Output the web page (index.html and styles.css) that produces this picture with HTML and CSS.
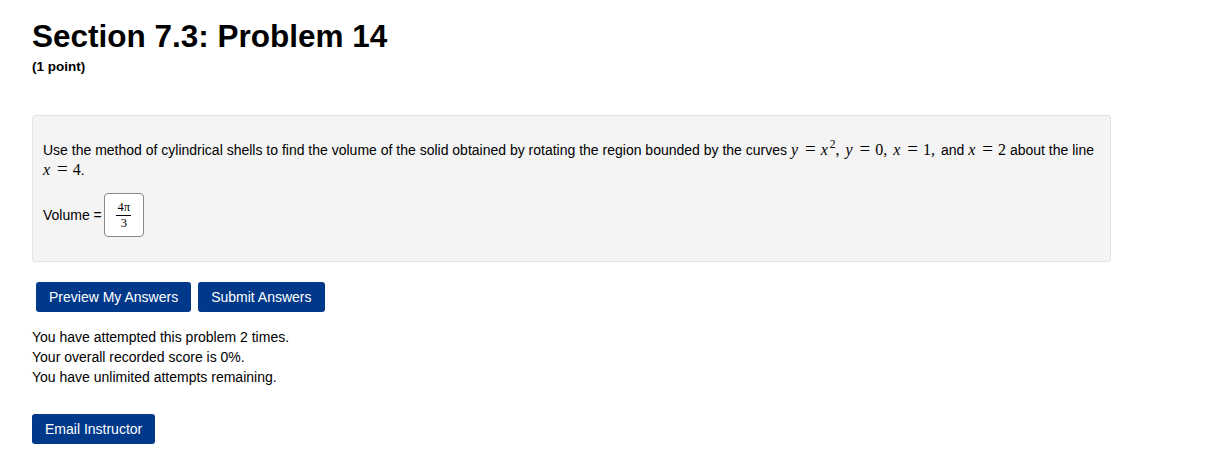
FILE: index.html
```html
<!DOCTYPE html>
<html lang="en">
<head>
<meta charset="utf-8">
<title>Section 7.3: Problem 14</title>
<link rel="stylesheet" href="styles.css">
</head>
<body>
<div class="page">
  <h1 class="title">Section 7.3: Problem 14</h1>
  <div class="points">(1 point)</div>

  <div class="problem">
    <p class="statement">Use the method of cylindrical shells to find the volume of the solid obtained by rotating the region bounded by the curves <span class="m"><i>y</i><span class="rel">=</span><i>x</i><sup>2</sup><span class="punct">,</span></span> <span class="m"><i>y</i><span class="rel">=</span>0<span class="punct">,</span></span> <span class="m"><i>x</i><span class="rel">=</span>1<span class="punct">,</span></span> and <span class="m"><i>x</i><span class="rel">=</span>2</span> about the line <span class="m"><i>x</i><span class="rel">=</span>4</span>.</p>
    <div class="answer-row">
      <span class="answer-label">Volume =</span>
      <span class="answer-box">
        <span class="frac"><span class="num">4π</span><span class="den">3</span></span>
      </span>
    </div>
  </div>

  <div class="actions">
    <button class="btn" type="button">Preview My Answers</button>
    <button class="btn" type="button">Submit Answers</button>
  </div>

  <div class="status">
    <div>You have attempted this problem 2 times.</div>
    <div>Your overall recorded score is 0%.</div>
    <div>You have unlimited attempts remaining.</div>
  </div>

  <button class="btn email" type="button">Email Instructor</button>
</div>
</body>
</html>
```

FILE: styles.css
```css
html, body {
  margin: 0;
  background: #ffffff;
}

body {
  font-family: "Liberation Sans", Arial, sans-serif;
  font-size: 14px;
  line-height: 20px;
  color: #000000;
}

.page {
  padding: 17px 0 0 32px;
  width: 1079px;
}

.title {
  margin: 0;
  font-size: 31.5px;
  line-height: 38px;
  font-weight: bold;
  color: #000;
}

.points {
  margin-top: 2px;
  font-size: 13.5px;
  font-weight: bold;
  line-height: 20px;
}

.problem {
  margin-top: 38px;
  background: #f4f4f4;
  border: 1px solid #e2e2e2;
  border-radius: 3px;
  padding: 24px 10px 24px 10px;
}

.statement {
  margin: 0 0 13px 0;
  line-height: 20px;
}

.m {
  font-family: "Liberation Serif", "Times New Roman", serif;
  font-size: 16px;
  white-space: nowrap;
}

.m i {
  font-style: italic;
  padding-right: 2px;
}

.m .rel {
  font-size: 19px;
  line-height: 0;
  padding: 0 5px;
}

.m .punct {
  padding-right: 2px;
}

.m sup {
  font-size: 11.5px;
  line-height: 0;
  vertical-align: 7px;
}

.answer-row {
  display: flex;
  align-items: center;
  gap: 2px;
}

.answer-box {
  box-sizing: border-box;
  width: 40px;
  height: 44px;
  border: 1px solid #8a8a8a;
  border-radius: 4px;
  background: #ffffff;
  display: flex;
  align-items: center;
  justify-content: center;
}

.frac {
  display: inline-flex;
  flex-direction: column;
  align-items: center;
  font-family: "Liberation Serif", "Times New Roman", serif;
  font-size: 12.5px;
  line-height: 11px;
}

.frac .num {
  padding: 0 1px 2px;
  border-bottom: 1px solid #000;
}

.frac .den {
  padding-top: 2px;
}

.actions {
  margin-top: 20px;
  margin-left: 4px;
  display: flex;
  gap: 7px;
}

.btn {
  font-family: "Liberation Sans", Arial, sans-serif;
  font-size: 14px;
  line-height: 18px;
  padding: 6px 13px;
  color: #ffffff;
  background: #00388a;
  border: 0;
  border-radius: 3px;
  cursor: pointer;
}

.status {
  margin-top: 15px;
  line-height: 20px;
}

.email {
  margin-top: 27px;
}
```
